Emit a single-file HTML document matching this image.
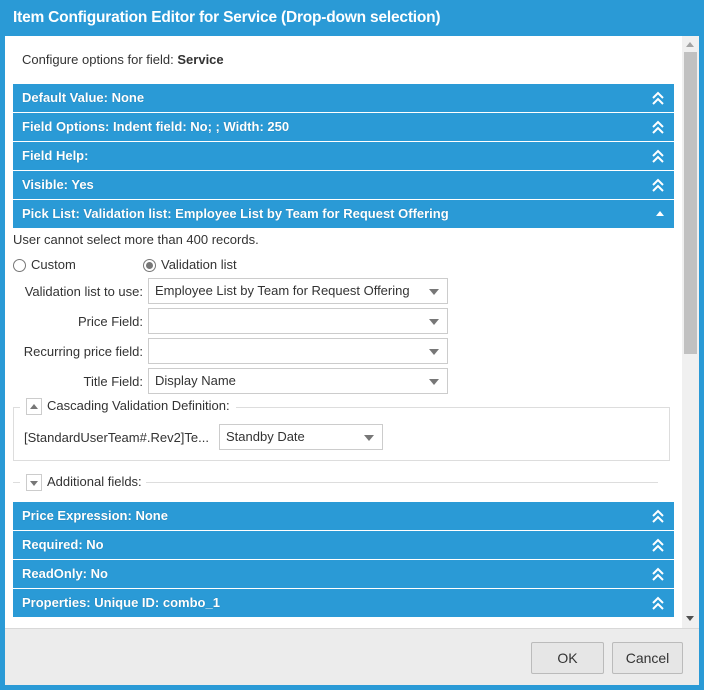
<!DOCTYPE html>
<html><head><style>
*{box-sizing:border-box;margin:0;padding:0}
body{width:704px;height:690px;background:#2a9ad6;font-family:"Liberation Sans",sans-serif;font-size:13px;color:#333;position:relative;overflow:hidden}
.a{position:absolute}
.title{left:13px;top:9px;color:#fff;font-weight:bold;font-size:15.5px;letter-spacing:-0.2px}
.content{left:5px;top:36px;width:694px;height:592px;background:#fff}
.footer{left:5px;top:628px;width:694px;height:57px;background:#ececec;border-top:1px solid #d8d8d8}
.hdr{left:13px;width:661px;height:28px;background:#2a9ad6;color:#fff;font-weight:bold;font-size:13px;line-height:28px;padding-left:9px;text-shadow:0 0 1px rgba(0,0,0,.3)}
.chev{position:absolute;right:10px;top:7px;width:12px;height:14px}
.sel{left:148px;width:300px;height:26px;border:1px solid #ccc;background:#fff;line-height:24px;padding-left:6px;font-size:13px}
.sel:after{content:"";position:absolute;right:8px;top:10px;border-left:5px solid transparent;border-right:5px solid transparent;border-top:6px solid #777}
.lbl{text-align:right;width:130px;left:13px;font-size:13px}
.btn{top:642px;height:32px;border:1px solid #bbb;border-radius:2px;background:#e6e6e6;text-align:center;line-height:30px;font-size:14px;color:#333}
.tg{width:16px;height:17px;border:1px solid #ccc;background:#fff}
</style></head><body>
<div class="a title">Item Configuration Editor for Service (Drop-down selection)</div>
<div class="a content"></div>
<div class="a" style="left:682px;top:36px;width:17px;height:592px;background:#f0f0f0"></div>
<div class="a" style="left:684px;top:52px;width:13px;height:302px;background:#c1c1c1"></div>
<div class="a" style="left:686px;top:42px;border-left:4px solid transparent;border-right:4px solid transparent;border-bottom:5px solid #a3a3a3"></div>
<div class="a" style="left:686px;top:616px;border-left:4px solid transparent;border-right:4px solid transparent;border-top:5px solid #505050"></div>
<div class="a" style="left:22px;top:52px;font-size:13px">Configure options for field: <b>Service</b></div>

<div class="a hdr" style="top:84px">Default Value: None<svg class="chev" viewBox="0 0 12 14"><path d="M1 7L6 2L11 7M1 13L6 8L11 13" fill="none" stroke="#fff" stroke-width="2"/></svg></div>
<div class="a hdr" style="top:113px">Field Options: Indent field: No; ; Width: 250<svg class="chev" viewBox="0 0 12 14"><path d="M1 7L6 2L11 7M1 13L6 8L11 13" fill="none" stroke="#fff" stroke-width="2"/></svg></div>
<div class="a hdr" style="top:142px">Field Help:<svg class="chev" viewBox="0 0 12 14"><path d="M1 7L6 2L11 7M1 13L6 8L11 13" fill="none" stroke="#fff" stroke-width="2"/></svg></div>
<div class="a hdr" style="top:171px">Visible: Yes<svg class="chev" viewBox="0 0 12 14"><path d="M1 7L6 2L11 7M1 13L6 8L11 13" fill="none" stroke="#fff" stroke-width="2"/></svg></div>
<div class="a hdr" style="top:200px">Pick List: Validation list: Employee List by Team for Request Offering<div style="position:absolute;right:10px;top:11px;border-left:4px solid transparent;border-right:4px solid transparent;border-bottom:5px solid #fff"></div></div>

<div class="a" style="left:13px;top:232px;font-size:13px">User cannot select more than 400 records.</div>
<div class="a" style="left:13px;top:259px;width:13px;height:13px;border:1px solid #777;border-radius:50%"></div>
<div class="a" style="left:31px;top:257px;font-size:13px">Custom</div>
<div class="a" style="left:143px;top:259px;width:13px;height:13px;border:1px solid #777;border-radius:50%"><div style="margin:2px;width:7px;height:7px;border-radius:50%;background:#777"></div></div>
<div class="a" style="left:161px;top:257px;font-size:13px">Validation list</div>

<div class="a lbl" style="top:284px;left:13px;width:130px">Validation list to use:</div>
<div class="a sel" style="top:278px">Employee List by Team for Request Offering</div>
<div class="a lbl" style="top:314px">Price Field:</div>
<div class="a sel" style="top:308px"></div>
<div class="a lbl" style="top:344px">Recurring price field:</div>
<div class="a sel" style="top:338px"></div>
<div class="a lbl" style="top:374px">Title Field:</div>
<div class="a sel" style="top:368px">Display Name</div>

<div class="a" style="left:13px;top:407px;width:657px;height:54px;border:1px solid #ddd"></div>
<div class="a" style="left:20px;top:400px;width:216px;height:14px;background:#fff"></div>
<div class="a tg" style="left:26px;top:398px"><div style="margin:5px 0 0 3px;border-left:4px solid transparent;border-right:4px solid transparent;border-bottom:5px solid #777;width:0"></div></div>
<div class="a" style="left:47px;top:398px;font-size:13px">Cascading Validation Definition:</div>
<div class="a" style="left:24px;top:430px;font-size:13px">[StandardUserTeam#.Rev2]Te...</div>
<div class="a sel" style="left:219px;width:164px;top:424px">Standby Date</div>

<div class="a" style="left:13px;top:482px;width:645px;height:1px;background:#ddd"></div>
<div class="a" style="left:20px;top:474px;width:126px;height:16px;background:#fff"></div>
<div class="a tg" style="left:26px;top:474px"><div style="margin:6px 0 0 3px;border-left:4px solid transparent;border-right:4px solid transparent;border-top:5px solid #777;width:0"></div></div>
<div class="a" style="left:47px;top:474px;font-size:13px">Additional fields:</div>

<div class="a hdr" style="top:502px">Price Expression: None<svg class="chev" viewBox="0 0 12 14"><path d="M1 7L6 2L11 7M1 13L6 8L11 13" fill="none" stroke="#fff" stroke-width="2"/></svg></div>
<div class="a hdr" style="top:531px">Required: No<svg class="chev" viewBox="0 0 12 14"><path d="M1 7L6 2L11 7M1 13L6 8L11 13" fill="none" stroke="#fff" stroke-width="2"/></svg></div>
<div class="a hdr" style="top:560px">ReadOnly: No<svg class="chev" viewBox="0 0 12 14"><path d="M1 7L6 2L11 7M1 13L6 8L11 13" fill="none" stroke="#fff" stroke-width="2"/></svg></div>
<div class="a hdr" style="top:589px">Properties: Unique ID: combo_1<svg class="chev" viewBox="0 0 12 14"><path d="M1 7L6 2L11 7M1 13L6 8L11 13" fill="none" stroke="#fff" stroke-width="2"/></svg></div>

<div class="a footer"></div>
<div class="a btn" style="left:531px;width:73px">OK</div>
<div class="a btn" style="left:612px;width:71px">Cancel</div>
</body></html>
